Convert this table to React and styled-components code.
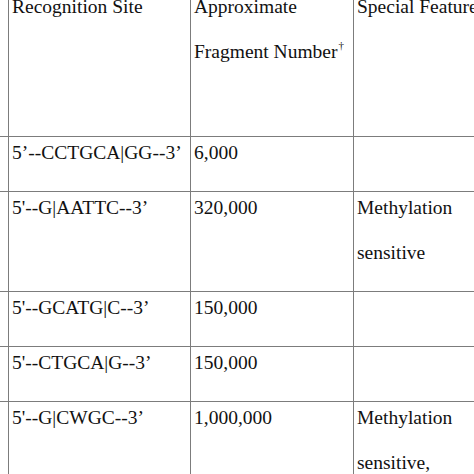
import React from "react";
import styled, { createGlobalStyle } from "styled-components";

const GlobalStyle = createGlobalStyle`
  html, body {
    margin: 0;
    padding: 0;
    background: #ffffff;
  }
  body {
    font-family: "Liberation Serif", "Times New Roman", serif;
    color: #111111;
  }
`;

const Frame = styled.div`
  width: 474px;
  height: 474px;
  overflow: hidden;
  background: #ffffff;
`;

const widths = [9, 182, 163, 170];

const Table = styled.table`
  border-collapse: separate;
  border-spacing: 0;
  table-layout: fixed;
  width: ${widths.reduce((a, b) => a + b, 0)}px;
  margin-top: -10px;
  font-size: 19.5px;
  line-height: 45px;
`;

const Cell = styled.td`
  box-sizing: border-box;
  width: ${(p) => p.$w}px;
  height: ${(p) => (p.$head ? "147px" : "auto")};
  padding: 0 0 16px 3px;
  vertical-align: top;
  text-align: left;
  font-weight: normal;
  white-space: nowrap;
  overflow: hidden;
  border-right: 1px solid #7c7c7c;
  border-bottom: 1px solid #7c7c7c;
  border-top: ${(p) => (p.$head ? "1px solid #7c7c7c" : "none")};
`;

const Lines = styled.div`
  margin-top: -7px;
`;

const Dagger = styled.sup`
  font-size: 11px;
  line-height: 0;
  vertical-align: 9px;
  margin-left: 1px;
`;

const header = [
  [],
  ["Recognition Site"],
  ["Approximate", <>Fragment Number<Dagger>†</Dagger></>],
  ["Special Features"],
];

const rows = [
  [[], ["5’--CCTGCA|GG--3’"], ["6,000"], []],
  [[], ["5'--G|AATTC--3’"], ["320,000"], ["Methylation", "sensitive"]],
  [[], ["5'--GCATG|C--3’"], ["150,000"], []],
  [[], ["5'--CTGCA|G--3’"], ["150,000"], []],
  [[], ["5'--G|CWGC--3’"], ["1,000,000"], ["Methylation", "sensitive,"]],
];

const CellText = ({ lines }) => (
  <Lines>
    {lines.map((line, i) => (
      <div key={i}>{line}</div>
    ))}
  </Lines>
);

const App = () => {
  return (
    <Frame>
      <GlobalStyle />
      <Table>
        <thead>
          <tr>
            {header.map((lines, i) => (
              <Cell as="th" key={i} $w={widths[i]} $head>
                <CellText lines={lines} />
              </Cell>
            ))}
          </tr>
        </thead>
        <tbody>
          {rows.map((row, r) => (
            <tr key={r}>
              {row.map((lines, i) => (
                <Cell key={i} $w={widths[i]}>
                  <CellText lines={lines} />
                </Cell>
              ))}
            </tr>
          ))}
        </tbody>
      </Table>
    </Frame>
  );
};

export default App;
